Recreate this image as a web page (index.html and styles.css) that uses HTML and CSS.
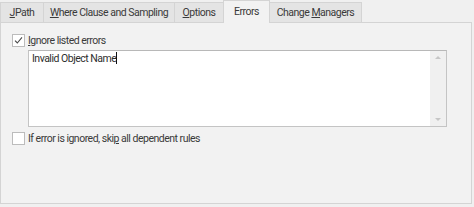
FILE: index.html
```html
<!DOCTYPE html>
<html lang="en">
<head>
    <meta charset="UTF-8">
    <title>Errors</title>
    <link rel="stylesheet" href="styles.css">
</head>
<body>
    <div class="dialog">
        <div class="tabs">
            <div class="tab w-jpath"><u>J</u>Path</div>
            <div class="tab w-where"><u>W</u>here Clause and Sampling</div>
            <div class="tab w-options"><u>O</u>ptions</div>
            <div class="tab active w-errors">Errors</div>
            <div class="tab w-managers">Change <u>M</u>anagers</div>
            <div class="tab-fill"></div>
        </div>

        <div class="panel">
            <label class="check">
                <span class="box checked">
                    <svg width="11" height="11" viewBox="0 0 11 11"><path d="M2 5.6 L4.3 8 L9 2.4" fill="none" stroke="#4a4a4a" stroke-width="1.1"/></svg>
                </span>
                <span><u>I</u>gnore listed errors</span>
            </label>

            <div class="memo">
                <div class="memo-text">Invalid Object Name<span class="caret"></span></div>
                <div class="scroll">
                    <span class="arrow up"></span>
                    <span class="arrow down"></span>
                </div>
            </div>

            <label class="check second">
                <span class="box"></span>
                <span>If error is ignored, ski<u>p</u> all dependent rules</span>
            </label>
        </div>
    </div>
</body>
</html>
```

FILE: styles.css
```css
body {
    margin: 0;
    background: #f0f0f0;
    font-family: Roboto, "Noto Sans", sans-serif;
    font-size: 10.5px;
    letter-spacing: -0.5px;
    color: #3a3a3a;
}
.dialog {
    width: 472px;
}
.tabs {
    display: flex;
    align-items: flex-end;
    height: 23px;
}
.tab {
    box-sizing: border-box;
    height: 21px;
    line-height: 19px;
    text-align: center;
    background: #e4e4e4;
    border: 1px solid #d4d4d4;
    border-right: none;
    white-space: nowrap;
}
.tab.active {
    height: 23px;
    line-height: 22px;
    background: #f2f2f2;
    border-right: 1px solid #d4d4d4;
    border-bottom: none;
}
.tab.active + .tab {
    border-left: none;
}
.tab.w-managers {
    border-right: 1px solid #d4d4d4;
}
.w-jpath { width: 43px; }
.w-where { width: 131px; }
.w-options { width: 49px; }
.w-errors { width: 47px; }
.w-managers { width: 92px; }
.tab-fill {
    flex: 1;
    height: 1px;
    background: #d4d4d4;
}
.tab u {
    text-underline-offset: 1px;
}
.panel {
    box-sizing: border-box;
    height: 181px;
    background: #f2f2f2;
    border: 1px solid #d4d4d4;
    border-top: none;
    padding: 10px 0 0 11px;
}
.check {
    display: flex;
    align-items: center;
    gap: 3px;
    height: 14px;
}
.box {
    box-sizing: border-box;
    width: 13px;
    height: 13px;
    background: #fff;
    border: 1px solid #bcbcbc;
    display: flex;
    align-items: center;
    justify-content: center;
}
.memo {
    box-sizing: border-box;
    display: flex;
    margin: 3px 0 0 16px;
    width: 419px;
    height: 77px;
    background: #fff;
    border: 1px solid #c4c4c4;
    border-top-color: #b8b8b8;
}
.memo-text {
    flex: 1;
    padding: 1px 0 0 3px;
    line-height: 14px;
    color: #2e2e2e;
}
.caret {
    display: inline-block;
    width: 1px;
    height: 12px;
    background: #111;
    vertical-align: -2px;
}
.scroll {
    width: 16px;
    background: #f0f0f0;
    display: flex;
    flex-direction: column;
    justify-content: space-between;
    align-items: center;
    padding: 5px 0;
}
.arrow {
    width: 0;
    height: 0;
    border-left: 3px solid transparent;
    border-right: 3px solid transparent;
}
.arrow.up {
    border-bottom: 3px solid #c6c6c6;
}
.arrow.down {
    border-top: 3px solid #c6c6c6;
}
.check.second {
    margin-top: 4px;
}
```
